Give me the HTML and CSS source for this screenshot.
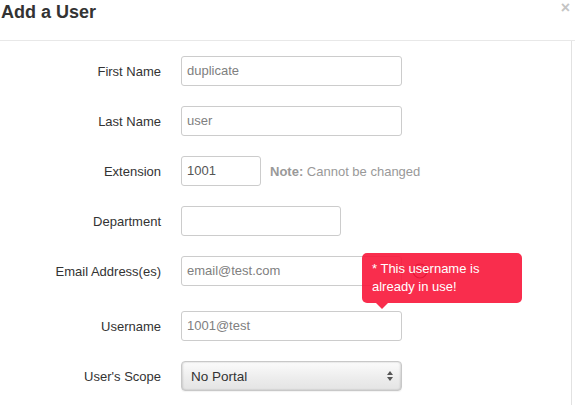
FILE: index.html
```html
<!DOCTYPE html>
<html>
<head>
<meta charset="utf-8">
<link rel="stylesheet" href="styles.css">
</head>
<body>
<div class="modal">
  <div class="modal-header">
    <h3 class="title">Add a User</h3>
    <span class="close">&times;</span>
  </div>
  <div class="modal-body">
    <div class="row">
      <label class="lbl">First Name</label>
      <div class="field w220 light">duplicate</div>
    </div>
    <div class="row">
      <label class="lbl">Last Name</label>
      <div class="field w220 light">user</div>
    </div>
    <div class="row">
      <label class="lbl">Extension</label>
      <div class="field w80 dark">1001</div>
      <span class="note"><b>Note:</b> Cannot be changed</span>
    </div>
    <div class="row">
      <label class="lbl">Department</label>
      <div class="field w160"></div>
    </div>
    <div class="row row-email">
      <label class="lbl">Email Address(es)</label>
      <div class="field w220 light">email@test.com</div>
      <span class="info-icon">
        <svg width="16" height="16" viewBox="0 0 16 16"><circle cx="8" cy="8" r="7" fill="none" stroke="#333" stroke-width="1.2"/><path d="M8 5v6M5 8h6" stroke="#333" stroke-width="1.2"/></svg>
      </span>
      <div class="tooltip">* This username is<br>already in use!</div>
    </div>
    <div class="row">
      <label class="lbl">Username</label>
      <div class="field w220 light">1001@test</div>
    </div>
    <div class="row">
      <label class="lbl">User's Scope</label>
      <div class="select w220">
        <span>No Portal</span>
        <span class="arrows"><i class="up"></i><i class="down"></i></span>
      </div>
    </div>
  </div>
</div>
</body>
</html>
```
FILE: styles.css
```css
html, body {
  margin: 0;
  padding: 0;
  background: #fff;
  font-family: "Liberation Sans", Arial, sans-serif;
  color: #333;
}
.modal {
  width: 575px;
  height: 405px;
  overflow: hidden;
}
.modal-header {
  display: flex;
  justify-content: space-between;
  align-items: flex-start;
  height: 40px;
  border-bottom: 1px solid #e8e8e8;
}
.title {
  margin: 0;
  padding-left: 1px;
  font-size: 18px;
  font-weight: bold;
  line-height: 24px;
  color: #333;
}
.close {
  font-size: 16px;
  line-height: 14px;
  font-weight: bold;
  color: #c4c4c4;
  margin-right: 5px;
  padding-top: 1px;
}
.modal-body {
  width: 571px;
  border-right: 1px solid #e2e2e2;
  padding-top: 15px;
  height: 400px;
}
.row {
  position: relative;
  display: flex;
  align-items: center;
  height: 30px;
  margin-bottom: 20px;
}
.row-email {
  margin-bottom: 25px;
}
.lbl {
  width: 161px;
  margin-right: 20px;
  text-align: right;
  font-size: 13px;
  color: #333;
}
.field {
  box-sizing: border-box;
  height: 30px;
  border: 1px solid #ccc;
  border-radius: 3px;
  padding: 0 5px;
  font-size: 13px;
  line-height: 28px;
  background: #fff;
}
.light { color: #808080; }
.dark { color: #555; }
.w220 { width: 221px; }
.w160 { width: 160px; }
.w80 { width: 80px; }
.note {
  margin-left: 9px;
  font-size: 13px;
  color: #999;
}
.note b { color: #999; }
.info-icon {
  margin-left: 10px;
  width: 16px;
  height: 16px;
  display: flex;
}
.tooltip {
  position: absolute;
  left: 362px;
  top: -3px;
  box-sizing: border-box;
  width: 160px;
  height: 50px;
  padding: 7px 10px;
  background: rgba(248, 22, 58, 0.9);
  border-radius: 5px;
  color: #fff;
  font-size: 13px;
  line-height: 18px;
}
.tooltip::after {
  content: "";
  position: absolute;
  left: 14px;
  bottom: -6px;
  border-left: 6px solid transparent;
  border-right: 6px solid transparent;
  border-top: 6px solid rgba(248, 22, 58, 0.9);
}
.select {
  box-sizing: border-box;
  height: 30px;
  border: 1px solid #c8c8c8;
  border-radius: 4px;
  padding: 0 8px 0 9px;
  display: flex;
  align-items: center;
  justify-content: space-between;
  font-size: 13.5px;
  color: #333;
  background: linear-gradient(to bottom, #fbfbfb 0%, #ececec 60%, #e4e4e4 100%);
  box-shadow: inset 1px 0 2px rgba(0,0,0,0.12), inset -1px 0 2px rgba(0,0,0,0.12), 0 1px 1px rgba(0,0,0,0.05);
}
.arrows {
  display: flex;
  flex-direction: column;
  gap: 2px;
}
.arrows i {
  display: block;
  width: 0;
  height: 0;
  border-left: 3px solid transparent;
  border-right: 3px solid transparent;
}
.arrows .up { border-bottom: 4px solid #555; }
.arrows .down { border-top: 4px solid #555; }
```
